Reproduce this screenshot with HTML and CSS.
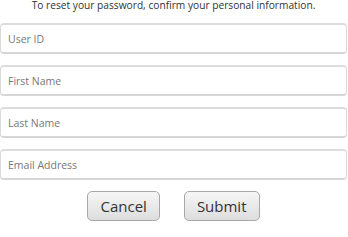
FILE: index.html
```html
<!DOCTYPE html>
<html lang="en">
<head>
    <meta charset="UTF-8">
    <meta name="viewport" content="width=device-width, initial-scale=1.0">
    <title>Reset Password</title>
    <link rel="stylesheet" href="styles.css">
</head>
<body>
    <div class="reset-form">
        <p class="reset-intro">To reset your password, confirm your personal information.</p>
        <input class="reset-input" type="text" placeholder="User ID">
        <input class="reset-input" type="text" placeholder="First Name">
        <input class="reset-input" type="text" placeholder="Last Name">
        <input class="reset-input" type="email" placeholder="Email Address">
        <div class="reset-actions">
            <button class="reset-btn" type="button">Cancel</button>
            <button class="reset-btn" type="submit">Submit</button>
        </div>
    </div>
</body>
</html>
```

FILE: styles.css
```css
* {
    margin: 0;
    padding: 0;
    box-sizing: border-box;
}

body {
    font-family: 'Open Sans', 'Noto Sans', sans-serif;
    background: #ffffff;
    color: #333333;
}

.reset-form {
    display: flex;
    flex-direction: column;
    gap: 11px;
    width: 347px;
}

.reset-intro {
    font-size: 10.2px;
    line-height: 14px;
    margin-top: -2px;
    margin-bottom: 0;
    text-align: center;
    color: #333333;
}

.reset-input {
    width: 100%;
    height: 31px;
    padding: 0 7px;
    font-family: inherit;
    font-size: 10.5px;
    color: #333333;
    border: 1px solid #dadada;
    border-top: 2px solid #dcdcdc;
    border-bottom: 2px solid #d6d6d6;
    border-radius: 4px;
    outline: none;
}

.reset-input::placeholder {
    color: #777777;
}

.reset-actions {
    display: flex;
    justify-content: center;
    gap: 24px;
}

.reset-btn {
    height: 30px;
    padding: 0 12px;
    font-family: inherit;
    font-size: 15px;
    color: #333333;
    background: linear-gradient(to bottom, #f6f6f6, #dddddd);
    border: 1px solid #a8a8a8;
    border-radius: 5px;
    cursor: pointer;
}

.reset-btn:hover {
    background: linear-gradient(to bottom, #ffffff, #e6e6e6);
}
```
